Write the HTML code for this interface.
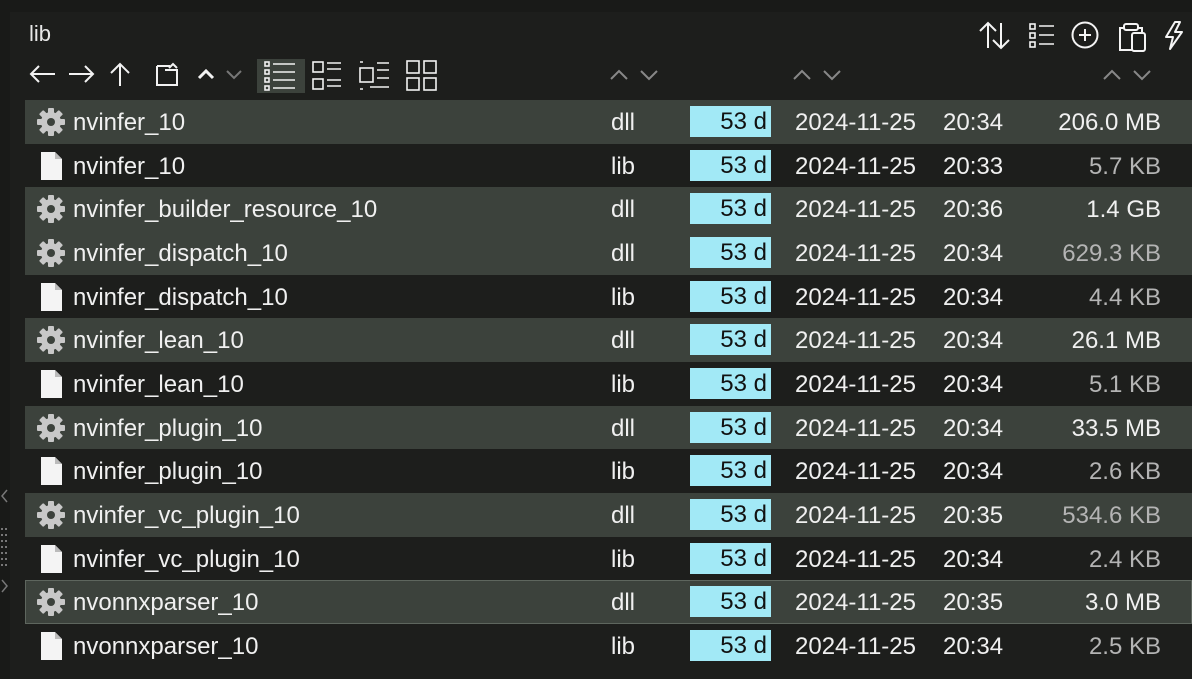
<!DOCTYPE html>
<html><head><meta charset="utf-8"><style>
*{margin:0;padding:0;box-sizing:border-box}
body{width:1192px;height:679px;background:#1d1e1c;font-family:"Liberation Sans",sans-serif;color:#f0f0f0;position:relative;overflow:hidden}
.top{position:absolute;left:0;top:0;width:1192px;height:12px;background:#191a18}
.lstrip{position:absolute;left:0;top:0;width:10px;height:679px;background:#191a18}
.title{position:absolute;left:29px;top:21px;font-size:22px;color:#e8e8e8}
.ic{position:absolute}
.row{position:absolute;left:25px;width:1167px;height:43.7px;font-size:24px}
.row.h{background:#3c423c}
.row.sel{box-shadow:inset 0 0 0 1px #5e665e}
.row span{position:absolute;top:9px;white-space:nowrap}
.n{left:48px}.t{left:586px}.d{left:770px}.tm{left:918px}.s{right:31px;text-align:right}
.b{position:absolute;left:665px;top:6px;width:81px;height:31px;background:#a2e9f6;color:#111;text-align:right;padding-right:4px;font-size:24px;line-height:32px}
.grey{color:#b4b4b4}
.icn{position:absolute;left:11px;top:7px}
</style></head><body>
<div class="top"></div><div class="lstrip"></div>
<svg class="ic" style="left:0;top:488px" width="10" height="110"><path d="M7 2 L2 8 L7 14" stroke="#777" fill="none" stroke-width="1.5"/><g fill="#777"><rect x="1" y="40" width="2" height="2"/><rect x="5" y="40" width="2" height="2"/><rect x="1" y="46" width="2" height="2"/><rect x="5" y="46" width="2" height="2"/><rect x="1" y="52" width="2" height="2"/><rect x="5" y="52" width="2" height="2"/><rect x="1" y="58" width="2" height="2"/><rect x="5" y="58" width="2" height="2"/><rect x="1" y="64" width="2" height="2"/><rect x="5" y="64" width="2" height="2"/><rect x="1" y="70" width="2" height="2"/><rect x="5" y="70" width="2" height="2"/><rect x="1" y="76" width="2" height="2"/><rect x="5" y="76" width="2" height="2"/></g><path d="M2 92 L7 98 L2 104" stroke="#777" fill="none" stroke-width="1.5"/></svg>
<div class="title">lib</div>
<svg class="ic" style="left:25px;top:58px" width="420" height="36" fill="none" stroke="#f2f2f2" stroke-width="2">
<path d="M6 16 H30 M14 8 L6 16 L14 24"/>
<path d="M44 16 H68 M60 8 L68 16 L60 24"/>
<path d="M95 6 V28 M86 15 L95 6 L104 15"/>
<path d="M132 8 V27 H152 V12 H140 M132 8 H145" /><path d="M144 10 L148 6 L152 10"/>
<path d="M174 20 L181 13 L188 20" stroke-width="3"/>
<path d="M202 13 L209 20 L216 13" stroke="#777"/>
<rect x="232" y="1" width="48" height="34" fill="#3c423c" stroke="none"/>
<g stroke-width="1.6"><rect x="240" y="4" width="4" height="4"/><rect x="240" y="12" width="4" height="4"/><rect x="240" y="20" width="4" height="4"/><rect x="240" y="28" width="4" height="4"/><path d="M248 6 H270 M248 14 H270 M248 22 H270 M248 30 H270"/>
<rect x="288" y="4" width="10" height="10"/><rect x="288" y="21" width="10" height="10"/><path d="M302 5 H316 M302 11 H316 M302 22 H316 M302 28 H316"/>
<rect x="335" y="10" width="13" height="14"/><path d="M335 4 h3 M335 31 h3 M352 5 H364 M352 12 H364 M352 20 H364 M345 29 H364"/>
<rect x="382" y="3" width="12" height="12"/><rect x="399" y="3" width="12" height="12"/><rect x="382" y="20" width="12" height="12"/><rect x="399" y="20" width="12" height="12"/></g>
</svg>
<svg class="ic" style="left:975px;top:18px" width="217" height="36" fill="none" stroke="#f4f4f4" stroke-width="2">
<path d="M13 5 V30 M5 13 L13 5 L21 13 M26 5 V30 M18 22 L26 30 L34 22"/>
<g stroke-width="1.6"><rect x="55" y="6" width="5" height="5"/><rect x="55" y="15" width="5" height="5"/><rect x="55" y="24" width="5" height="5"/><path d="M64 8 H79 M64 17 H79 M64 26 H79"/></g>
<circle cx="110" cy="17" r="12.5"/><path d="M110 11 V23 M104 17 H116"/>
<path d="M150 10 H145 V32 H157 M162 10 H167 V14"/><rect x="149" y="6" width="14" height="6" rx="2"/><rect x="157" y="15" width="13" height="18" rx="2"/>
<path d="M200 4 L191 19 H198 L195 31 L207 14 H200 L205 4 Z" stroke-linejoin="round"/>
</svg>
<svg class="ic" style="left:605px;top:65px" width="580" height="20" fill="none" stroke="#888" stroke-width="2">
<path d="M6 14 L14 6 L22 14 M36 6 L44 14 L52 6"/>
<path d="M189 14 L197 6 L205 14 M219 6 L227 14 L235 6"/>
<path d="M499 14 L507 6 L515 14 M529 6 L537 14 L545 6"/>
</svg>
<div id="rows"></div>
<script>
const data=[["nvinfer_10","dll","20:34","206.0 MB"],["nvinfer_10","lib","20:33","5.7 KB"],["nvinfer_builder_resource_10","dll","20:36","1.4 GB"],["nvinfer_dispatch_10","dll","20:34","629.3 KB"],["nvinfer_dispatch_10","lib","20:34","4.4 KB"],["nvinfer_lean_10","dll","20:34","26.1 MB"],["nvinfer_lean_10","lib","20:34","5.1 KB"],["nvinfer_plugin_10","dll","20:34","33.5 MB"],["nvinfer_plugin_10","lib","20:34","2.6 KB"],["nvinfer_vc_plugin_10","dll","20:35","534.6 KB"],["nvinfer_vc_plugin_10","lib","20:34","2.4 KB"],["nvonnxparser_10","dll","20:35","3.0 MB"],["nvonnxparser_10","lib","20:34","2.5 KB"]];
const gear='<svg class="icn" width="30" height="30" viewBox="0 0 30 30"><g fill="#c8c8c8"><circle cx="15" cy="15" r="10"/>'+[0,45,90,135].map(a=>'<rect x="12" y="1" width="6" height="28" rx="1" transform="rotate('+a+' 15 15)"/>').join('')+'</g><circle cx="15" cy="15" r="4" fill="#3c423c"/></svg>';
const file='<svg class="icn" style="left:16px;top:8px" width="22" height="28"><path d="M0 0 H14 L21 7 V28 H0 Z" fill="#f4f4f4"/><path d="M14 0 V7 H21" fill="#bbb"/></svg>';
let h='';data.forEach((r,i)=>{const top=100+i*43.67;const dll=r[1]=='dll';const g=/KB/.test(r[3])?' grey':'';
h+=`<div class="row${dll?' h':''}${i==11?' sel':''}" style="top:${top}px">${dll?gear:file}<span class="n">${r[0]}</span><span class="t">${r[1]}</span><div class="b">53 d</div><span class="d">2024-11-25</span><span class="tm">${r[2]}</span><span class="s${g}">${r[3]}</span></div>`});
document.getElementById('rows').innerHTML=h;
</script>
</body></html>
